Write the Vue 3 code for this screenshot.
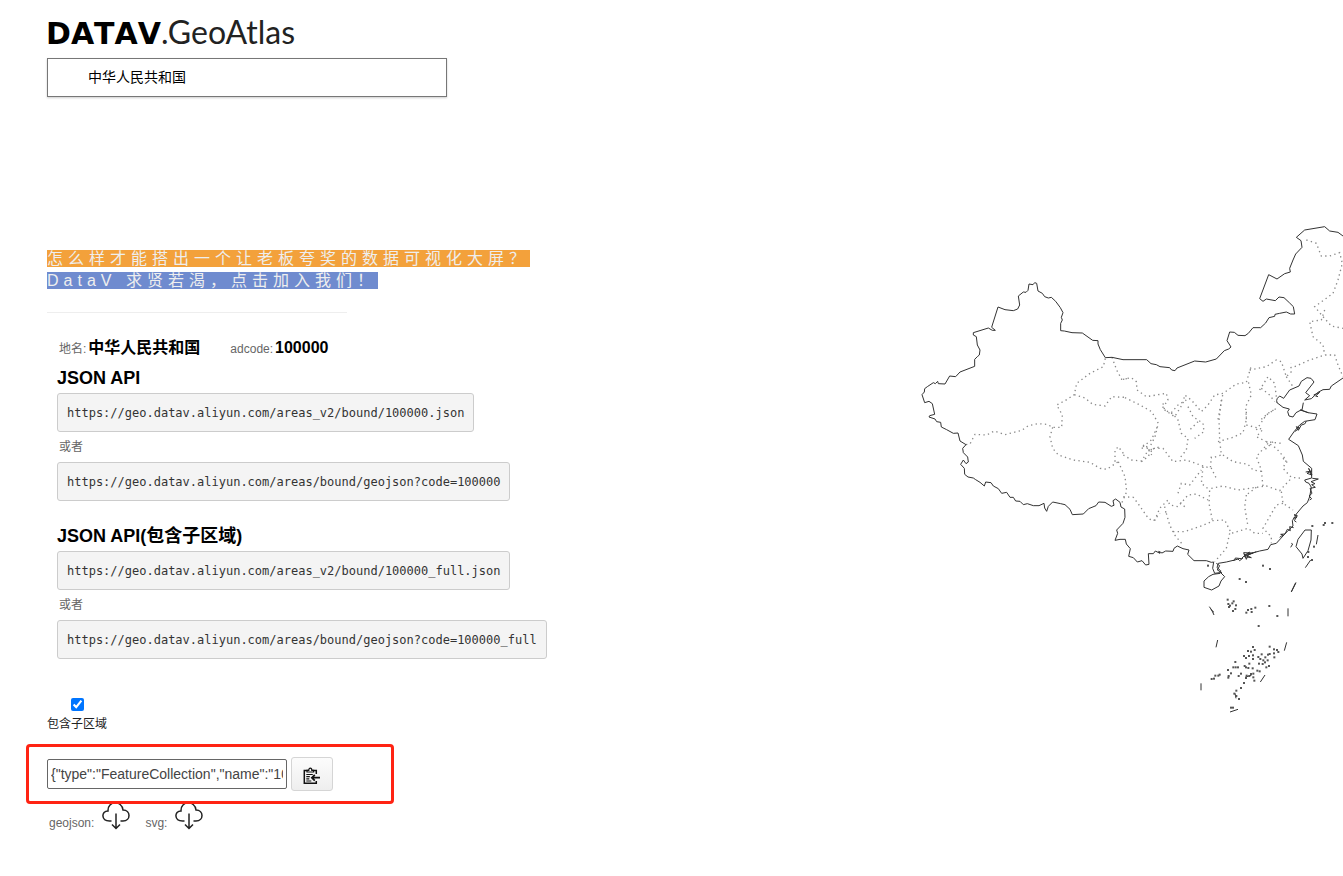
<template>
  <div class="page">
    <main class="panel">
      <h1 class="logo"><span class="logo-bold">DATAV</span><span class="logo-light">.GeoAtlas</span></h1>
      <input v-model="keyword" type="text" class="search" aria-label="搜索地名" />

      <div class="promo">
        <a href="#" class="promo-link orange">怎么样才能搭出一个让老板夸奖的数据可视化大屏？</a>
        <a href="#" class="promo-link blue">DataV 求贤若渴，点击加入我们！</a>
      </div>

      <hr class="divider" />

      <div class="info">
        <div class="meta">
          <span class="meta-item">地名:<strong>中华人民共和国</strong></span>
          <span class="meta-item">adcode:<strong>100000</strong></span>
        </div>

        <section v-for="api in apis" :key="api.title" class="api">
          <h2>{{ api.title }}</h2>
          <code class="url">{{ api.urls[0] }}</code>
          <span class="or">或者</span>
          <code class="url">{{ api.urls[1] }}</code>
        </section>
      </div>

      <label class="sub-area">
        <input v-model="includeSub" type="checkbox" />
        包含子区域
      </label>

      <div class="copy-row">
        <input v-model="geojson" type="text" class="copy-input" aria-label="geojson" />
        <button type="button" class="copy-btn" aria-label="复制">
          <svg width="18" height="18" viewBox="0 0 18 18" fill="none" stroke="#111" stroke-width="1.5">
            <path d="M13.3 7V3.4H1.3v12.8h12V14" />
            <path d="M4 5V3.3h1.8c0-3 3-3 3 0h1.8V5z" fill="#fff" stroke-width="1.2" />
            <path d="M3.3 7.5h6.5M3.3 9.7h3.5M3.3 11.9h3M3.3 14h5" stroke-width="1.2" />
            <path d="M17 10.7H9M11.8 7.8L8.9 10.7l2.9 2.9" stroke-width="1.8" />
          </svg>
        </button>
      </div>

      <div class="downloads">
        <span v-for="name in ['geojson', 'svg']" :key="name" class="download">
          {{ name }}:
          <a href="#" :aria-label="name">
            <svg width="28" height="28" viewBox="0 0 28 28" fill="none" stroke="#222" stroke-width="1.5">
              <path d="M9.5 19H7.5C-1 19-1 9 6 9 5.5-1.500 20-2 21 8 29 8 29 19 21 19h-2.500" />
              <path d="M14 11.5v14.5M10 22.500l4 4 4-4" />
            </svg>
          </a>
        </span>
      </div>
    </main>

    <svg class="map" viewBox="0 0 1269 1500" role="img" aria-label="中华人民共和国">
      <!-- province borders -->
      <g class="province">
        <g v-for="area in provinces" :key="area.shift" :transform="area.shift">
          <polyline v-for="line in area.lines" :key="line" :points="line" />
        </g>
      </g>
      <!-- country outline -->
      <g class="country">
        <g v-for="area in outline" :key="area.shift" :transform="area.shift">
          <polyline v-for="line in area.lines" :key="line" :points="line" />
        </g>
      </g>
      <!-- small islands -->
      <g class="island" transform="translate(780 1020)">
        <rect v-for="([x, y], i) in islands" :key="i" :x="x - 3" :y="y - 3" width="6" height="6" />
      </g>
    </svg>
  </div>
</template>

<script setup>
import { ref } from 'vue'

const keyword = ref('中华人民共和国')
const includeSub = ref(true)
const geojson = ref('{"type":"FeatureCollection","name":"100000_full","features":[]}')

const host = 'https://geo.datav.aliyun.com'
const apis = [
  {
    title: 'JSON API',
    urls: [`${host}/areas_v2/bound/100000.json`, `${host}/areas/bound/geojson?code=100000`],
  },
  {
    title: 'JSON API(包含子区域)',
    urls: [`${host}/areas_v2/bound/100000_full.json`, `${host}/areas/bound/geojson?code=100000_full`],
  },
]

const NW = 'translate(-30 150)'
const NE = 'translate(609 0)'
const SW = 'translate(60 480)'
const SE = 'translate(609 540)'
const SEA = 'translate(780 1020)'

const outline = [
  {
    shift: NW,
    lines: [
      '639,269 606,262 586,263 571,239 564,222 564,212 548,211 517,189 486,188 463,183 452,182 452,160 457,150 454,142 459,128 451,113 437,94 424,82 415,84 404,80 397,70 384,63 380,40 374,38 369,44 357,42 354,61 348,67 340,66 325,78 329,105 323,117 310,122 285,119 264,111 247,165 245,172 256,181 247,181 235,174 190,188 190,195 199,200 202,225 210,240 208,255 202,260 194,268 194,289 150,306 137,320 119,318 105,342 85,341 83,334 76,341 70,338 52,350 44,356 43,366 36,374 44,398 57,394 67,401 74,433 59,437 57,441 75,447 80,455 92,457 94,471 110,479 130,490 144,489 150,513 168,524 158,535 160,548 173,561 175,576 168,581 160,570 152,583 163,595 164,613 174,621 190,624 197,629',
    ],
  },
  {
    shift: SW,
    lines: [
      '107,299 120,307 133,318 137,306 153,308 160,318 175,326 185,340 200,337 210,352 220,352 227,363 240,364 250,374 262,371 280,377 297,377 312,370 314,384 320,394 325,379 338,366 362,371 375,374 390,388 397,404 430,402 446,386 468,377 476,366 495,367 514,379 522,376 519,362 527,357 540,367 543,381 554,387 555,412 549,430 530,450 533,460 525,481 540,478 556,478 559,492 571,506 566,529 580,533 592,546 606,542 617,555 627,553 625,521 640,521 646,513 660,520',
    ],
  },
  {
    shift: SE,
    lines: [
      '111,460 107,454 117,459 128,453 150,454 153,445 163,438 180,446 198,450 194,463 213,482 250,482 265,487 272,486 269,505 275,520 290,518 293,512 282,503 286,490 310,486 335,480 337,474 355,476 370,462 385,460 410,453 435,448 443,434 460,430 480,408 495,392 510,378 508,362 516,350 520,342 540,318 553,308 560,290 565,262 558,250 548,246 545,240 566,234 566,205 541,184 538,165 526,137 497,118 513,95 530,75 545,64 576,59 582,42 555,38 534,30 519,38 510,51 498,48 494,35 499,27 480,22 462,8',
      // Taiwan and Hainan
      '546,390 565,390 564,420 555,452 540,475 537,462 519,440 525,418 546,390',
      '292,520 270,523 257,530 243,543 243,562 266,570 288,558 294,543 305,530 290,515',
      '280,490 290,497 283,510 297,518',
      // coast detail
      '330,482 345,477 350,482 360,474',
      '362,462 385,473 364,470 379,456 370,478 362,458 390,459 372,466 400,455',
      '470,412 480,405 473,403 486,402 493,388 502,392 500,380 512,383',
      '510,355 522,352 513,344 523,347 514,362 520,366',
      '560,300 566,296 558,288 567,280 561,265 577,262 566,254 576,251 564,245 586,237 568,235',
      '548,216 566,213 552,220 567,225 557,205 566,228',
      '515,95 530,84 520,80 526,91 535,75 545,72 550,64',
      '503,442 509,432 505,430',
      '585,405 580,433',
      '563,480 547,503',
      '518,548 505,575',
    ],
  },
  {
    shift: NE,
    lines: [
      '0,419 71,419 84,431 100,434 111,440 140,443 146,450 156,452 162,444 215,423 248,426 280,417 304,392 317,387 324,381 312,362 320,336 334,337 345,346 366,347 376,340 390,323 413,323 428,309 438,293 455,289 456,283 470,280 490,276 503,282 515,282 511,260 500,249 483,233 468,231 457,242 430,237 420,244 410,236 437,164 462,177 485,161 502,156 500,145 510,120 518,102 537,82 534,62 520,52 545,30 605,20 620,33 645,37 660,48',
      '462,549 461,541 463,535 470,528 482,535 500,510 528,498 535,484 552,473 564,475 573,486 548,518 560,527 545,540 565,536 585,517 600,509 620,508 625,498 660,474',
      '541,548 537,570 532,570 556,578',
      '572,525 590,517 578,528 585,530',
    ],
  },
  {
    shift: SEA,
    lines: [
      '88,140 95,150 102,165',
      '92,148 102,157',
      '348,68 334,96',
      '324,145 324,169',
      '113,240 108,262',
      '320,247 313,272',
      '255,345 241,366',
      '63,370 63,391',
      '150,456 174,448',
      '195,352 215,345',
      '165,400 168,415',
    ],
  },
]

const provinces = [
  {
    shift: NW,
    lines: [
      '168,524 180,522 195,493 230,495 253,483 285,494 335,481 355,467 385,461 410,463 430,472 455,472 457,435 440,405 465,392 493,374 500,340 540,310 580,290 586,265',
      '493,374 525,384 548,403 585,408 605,380 645,382',
      '606,262 620,300 635,328 660,325',
      '428,472 420,500 428,535 445,555 490,570 540,577 570,595 590,598 625,575',
      '615,575 615,540 625,530 640,550',
    ],
  },
  {
    shift: SW,
    lines: [
      '555,53 600,75 635,95 655,130 645,170 630,200',
      '550,225 575,240 605,243 625,210 645,205 660,200',
      '605,205 620,200 635,225',
      '535,245 555,290 560,335 545,370',
      '550,350 580,352 595,372 625,415 640,423 660,400',
    ],
  },
  {
    shift: NE,
    lines: [
      '0,478 25,473 40,485 42,510 70,530 100,525 130,520 135,540 118,565 140,580 155,590 180,550 185,525 205,540 235,575 255,555 275,525 300,520 340,492 370,487 385,437',
      '380,450 430,440 460,420 475,425 490,470 505,455 503,430',
      '490,470 510,500',
      '515,440 560,420 605,405 635,405 645,435 660,470',
      '285,598 300,520',
      '370,598 368,560 385,525 375,480',
      '410,510 435,470 455,490 460,530',
      '415,505 440,525 455,545',
      '415,598 435,580 460,565',
      '550,60 580,70 595,108 620,108 650,98 658,130 645,180 630,220 575,260 600,290 625,318 660,325',
      '605,270 595,300 560,305 570,350 600,375 605,405',
    ],
  },
  {
    shift: SE,
    lines: [
      '60,140 85,120 103,80',
      '55,185 75,170 90,145 120,145 150,185 190,180 240,198 265,205 280,235',
      '60,135 80,150 95,145',
      '120,10 125,30 150,42 165,60 175,100 195,115 190,150 170,175',
      '145,38 165,15 190,0',
      '195,20 210,50 240,70 243,95 215,115',
      '225,65 200,90',
      '295,0 288,60 290,120 295,165 265,175',
      '285,125 330,112 360,98 370,60 370,30',
      '370,75 420,88 400,110 430,125 475,130',
      '400,90 430,45 460,25',
      '435,130 400,170 415,210 420,260',
      '300,165 330,185 375,193 390,210 420,215',
      '430,125 460,145 490,180 480,205 505,232 540,235',
      '450,125 425,150',
      '480,175 495,190',
      '265,170 262,205',
      '240,200 235,250 260,270 258,310 268,360',
      '265,265 300,258 345,270 400,262 430,258 470,272 505,235',
      '370,285 365,320 375,380',
      '400,262 370,285',
      '475,275 480,310 510,330',
      '480,310 460,315 440,350 420,385 445,410 445,430',
      '268,362 305,360 325,400 375,385 395,400 420,400',
      '320,400 310,445 275,485',
      '150,395 185,395 235,378 265,365',
      '130,340 140,375 155,405 180,435',
      '95,362 110,325 135,300 140,315 165,320 195,285 220,282 255,300',
      '165,280 175,250 200,255 235,210',
      '185,320 165,300',
      '125,320 130,345',
    ],
  },
]

const islands = [
  [249, 17], [270, 27], [179, 57], [198, 66], [143, 119], [161, 124], [145, 132], [150, 137], [147, 141],
  [157, 130], [168, 136], [166, 147], [159, 153], [199, 158], [204, 150], [214, 147], [215, 156], [226, 143],
  [268, 138], [292, 168], [236, 198], [219, 261], [204, 273], [213, 275], [224, 270], [192, 288], [198, 294],
  [207, 288], [219, 286], [219, 297], [235, 291], [245, 283], [241, 297], [250, 301], [256, 292], [264, 284],
  [269, 282], [269, 260], [282, 268], [282, 280], [291, 270], [295, 276], [283, 292], [263, 301], [255, 307],
  [248, 312], [267, 318], [259, 322], [237, 311], [166, 306], [160, 322], [167, 322], [174, 322], [144, 330],
  [153, 340], [146, 348], [145, 353], [183, 341], [176, 348], [194, 318], [198, 322], [208, 311], [205, 324],
  [218, 325], [232, 332], [239, 334], [213, 342], [220, 341], [200, 347], [198, 354], [208, 348], [220, 352],
  [223, 362], [192, 369], [183, 384], [169, 392], [163, 401], [169, 408], [177, 417], [153, 443], [159, 443],
  [119, 344], [115, 347], [106, 347], [102, 356], [95, 357], [84, 17], [396, 0], [402, -40],
  [385, -24], [384, -9], [435, -111], [431, -105], [457, -111], [397, -102],
]
</script>

<style>
body {
  margin: 0;
  background: #fff;
}
</style>

<style scoped>
.page {
  display: grid;
  grid-template-columns: 1fr 423px;
  min-height: 100vh;
  overflow: hidden;
  font-family: 'Liberation Sans', 'Noto Sans CJK SC', sans-serif;
  font-size: 12px;
  color: #666;
}

.panel {
  display: flex;
  flex-direction: column;
  align-items: flex-start;
  padding: 14px 0 40px 46px;
}

.panel > :not(.logo) {
  margin-left: 1px;
}

.logo {
  height: 36px;
  margin: 0;
  font-size: 30px;
  line-height: 36px;
  color: #000;
  white-space: nowrap;
}

.logo-bold {
  font-family: 'DejaVu Sans', sans-serif;
  font-weight: 700;
  font-kerning: none;
}

.logo-light {
  font-family: Lato, sans-serif;
  font-size: 32px;
  font-weight: 400;
  color: #222;
}

.search {
  box-sizing: border-box;
  width: 400px;
  height: 39px;
  margin: 8px 0 0;
  padding: 0 40px 3px;
  border: 1px solid #777;
  border-radius: 0;
  background: #fff;
  box-shadow: 0 1px 2px rgba(0, 0, 0, 0.2);
  font: inherit;
  font-size: 14px;
  color: #000;
}

.promo {
  display: flex;
  flex-direction: column;
  align-items: flex-start;
  gap: 5px;
  margin-top: 153px;
}

.promo-link {
  height: 17px;
  font-size: 16px;
  line-height: 17px;
  letter-spacing: 5px;
  color: #eee;
  text-decoration: none;
  white-space: nowrap;
}

.orange {
  background: #f3a13b;
}

.blue {
  background: #6f8bcf;
}

.divider {
  width: 300px;
  height: 1px;
  margin: 23px 0 25px;
  border: 0;
  background: #eee;
}

.info {
  padding-left: 10px;
}

.meta {
  display: flex;
  gap: 30px;
  height: 20px;
  padding-left: 2px;
  margin-bottom: 10px;
  line-height: 20px;
}

.meta-item {
  display: flex;
  align-items: baseline;
  gap: 2px;
}

.meta strong {
  font-size: 16px;
  color: #000;
}

.api {
  display: flex;
  flex-direction: column;
  align-items: flex-start;
  margin-bottom: 25px;
}

.api h2 {
  height: 20px;
  margin: 0 0 5px;
  font-size: 18px;
  line-height: 20px;
  color: #000;
}

.url {
  padding: 10px 9px 8px;
  border: 1px solid #ccc;
  border-radius: 3px;
  background: #f4f4f4;
  font-family: 'DejaVu Sans Mono', monospace;
  font-size: 12px;
  line-height: 19px;
  color: #333;
}

.or {
  padding-left: 2px;
  line-height: 30px;
}

.sub-area {
  display: flex;
  flex-direction: column;
  align-items: center;
  gap: 4px;
  margin-top: 14px;
  line-height: 18px;
  color: #222;
}

.sub-area input {
  width: 13px;
  height: 13px;
  margin: 0;
}

.copy-row {
  position: relative;
  display: flex;
  align-items: center;
  gap: 4px;
  margin-top: 24px;
}

/* highlight frame around the copy controls */
.copy-row::after {
  content: '';
  position: absolute;
  top: -13px;
  right: -61px;
  bottom: -13px;
  left: -21px;
  border: 3px solid #ff2313;
  border-radius: 4px;
  pointer-events: none;
}

.copy-input {
  box-sizing: border-box;
  width: 240px;
  height: 30px;
  padding: 0 3px;
  border: 1px solid #666;
  border-radius: 2px;
  background: #fff;
  font: inherit;
  font-size: 14px;
  color: #444;
}

.copy-btn {
  display: flex;
  align-items: center;
  justify-content: center;
  width: 42px;
  height: 34px;
  padding: 4px 0 0;
  border: 1px solid #d5d5d5;
  border-radius: 3px;
  background: linear-gradient(#fcfcfc, #eee);
}

.downloads {
  display: flex;
  gap: 15px;
  margin-top: 11px;
  padding-left: 2px;
}

.download {
  display: flex;
  align-items: flex-end;
  gap: 8px;
  line-height: 14px;
}

.download a,
.download svg {
  display: block;
}

.map {
  width: 423px;
  height: 500px;
  margin-top: 220px;
}

.map polyline {
  fill: none;
}

.province {
  stroke: #888;
  stroke-width: 4;
  stroke-dasharray: 4 10;
}

.country {
  stroke: #333;
  stroke-width: 3;
  stroke-linejoin: round;
}

.island {
  fill: #555;
}
</style>
